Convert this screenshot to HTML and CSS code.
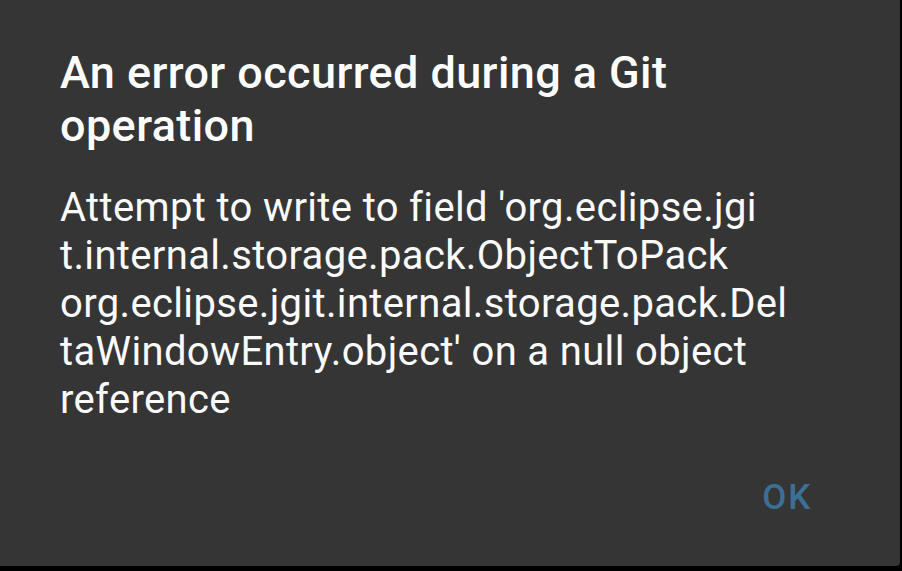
FILE: index.html
```html
<!DOCTYPE html>
<html>
<head>
<meta charset="utf-8">
<link rel="stylesheet" href="styles.css">
</head>
<body>
<div class="dialog">
  <h1 class="title">An error occurred during a Git<br>operation</h1>
  <p class="message">Attempt to write to field 'org.eclipse.jgi<br>t.internal.storage.pack.ObjectToPack<br>org.eclipse.jgit.internal.storage.pack.Del<br>taWindowEntry.object' on a null object<br>reference</p>
  <div class="actions">
    <button class="btn">OK</button>
  </div>
</div>
</body>
</html>
```

FILE: styles.css
```css
html, body {
  margin: 0;
  padding: 0;
  background: #000;
  height: 100%;
  overflow: hidden;
}
.dialog {
  width: 900px;
  height: 566px;
  box-sizing: border-box;
  background: #353535;
  border-radius: 0 0 4px 0;
  padding: 46px 0 0 60px;
  display: flex;
  flex-direction: column;
  font-family: Roboto, "Noto Sans", sans-serif;
  color: #fff;
}
.title {
  margin: 0;
  font-size: 45px;
  font-weight: 500;
  line-height: 53px;
  letter-spacing: 0.4px;
  white-space: nowrap;
}
.message {
  margin: 32px 0 0 0;
  font-size: 40px;
  font-weight: 400;
  line-height: 48px;
  letter-spacing: 0.35px;
  white-space: nowrap;
  color: #fafafa;
}
.actions {
  margin-top: auto;
  display: flex;
  justify-content: flex-end;
  padding: 0 88px 48px 0;
}
.btn {
  background: none;
  border: none;
  padding: 0;
  font-family: Roboto, "Noto Sans", sans-serif;
  font-size: 35px;
  font-weight: 500;
  letter-spacing: 0.05em;
  line-height: 41px;
  color: #3b6f96;
}
```
